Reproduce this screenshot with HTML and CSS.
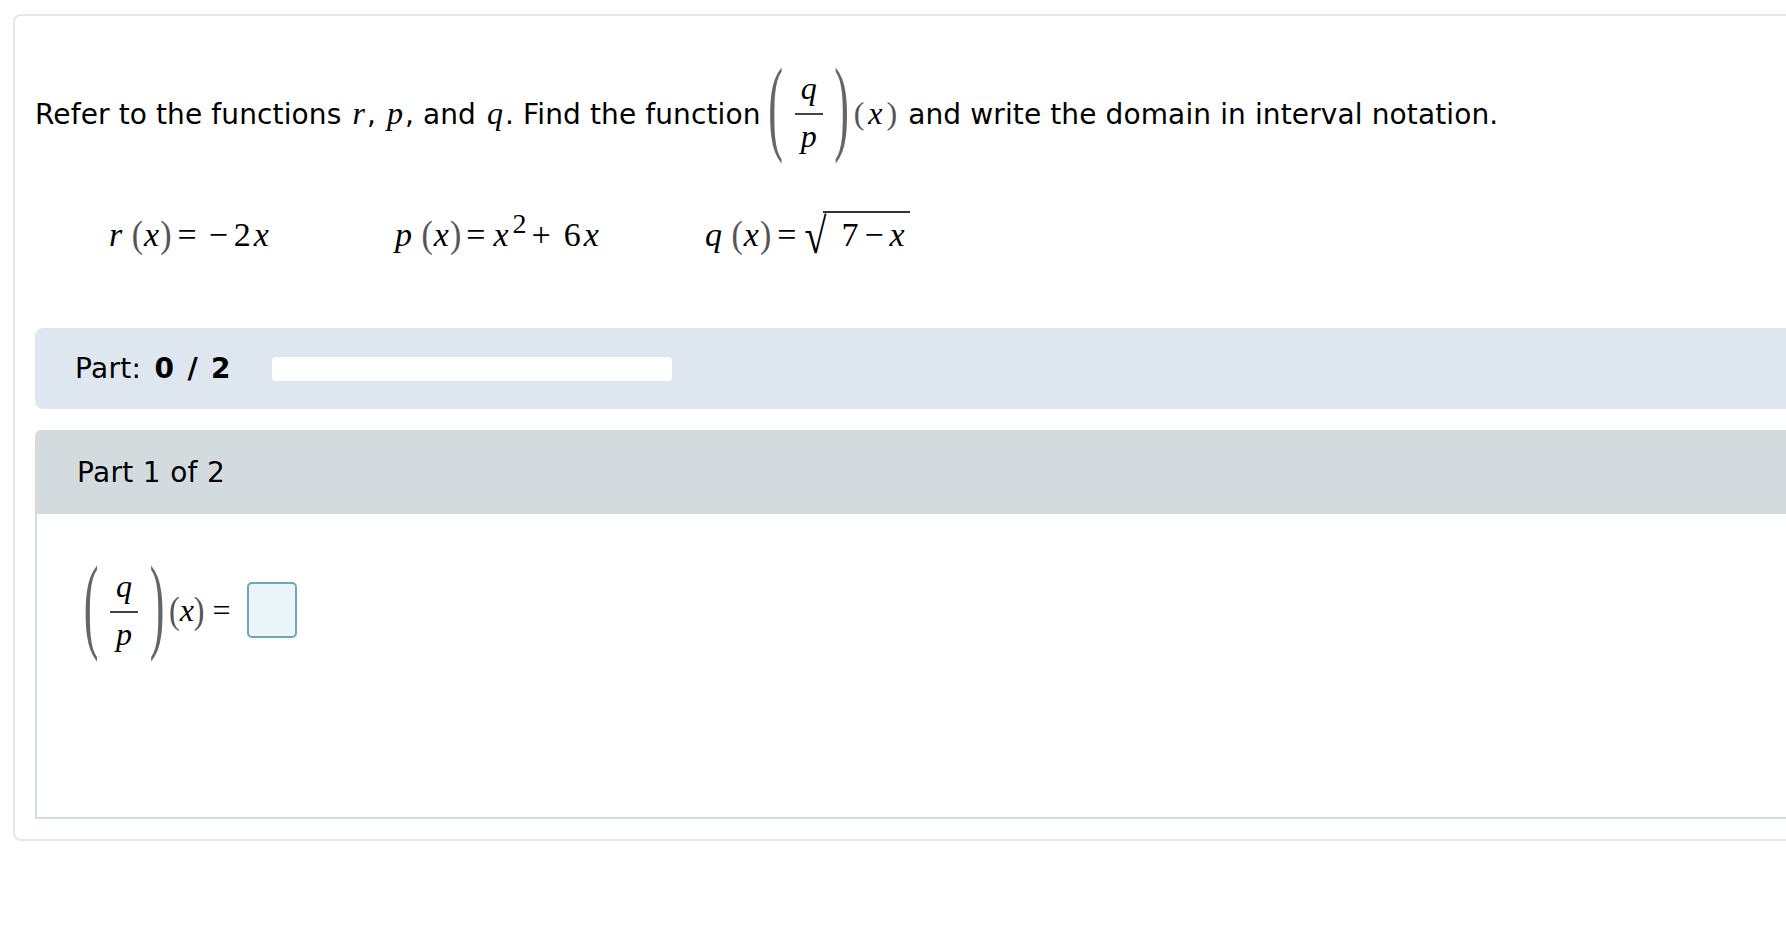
FILE: index.html
```html
<!DOCTYPE html>
<html lang="en">
<head>
    <meta charset="UTF-8">
    <title>Functions</title>
    <link rel="stylesheet" href="styles.css">
</head>
<body>
    <div class="card">
        <p class="question">Refer to the functions <i class="mi">r</i>, <i class="mi">p</i>, and <i class="mi">q</i>. Find the function <span class="frac-group q-group"><span class="bp"><span>(</span></span><span class="frac"><i class="mi">q</i><span class="bar"></span><i class="mi den">p</i></span><span class="bp"><span>)</span></span></span><span class="pr">(</span><i class="mi">x</i><span class="pr">)</span> and write the domain in interval notation.</p>

        <div class="fn-row">
            <div class="fn fn-r"><i>r</i> <span class="pr">(</span><i>x</i><span class="pr">)</span><span class="op eq-r">=</span><span class="op neg">−</span>2<i class="after-num">x</i></div>
            <div class="fn fn-p"><i>p</i> <span class="pr">(</span><i>x</i><span class="pr">)</span><span class="op eq-p">=</span><i>x</i><span class="sup">2</span><span class="op plus">+</span>6<i class="after-num">x</i></div>
            <div class="fn fn-q"><i>q</i> <span class="pr">(</span><i>x</i><span class="pr">)</span><span class="op eq-q">=</span><span class="rad">√</span><span class="radicand">7<span class="op minus">−</span><i>x</i></span></div>
        </div>

        <div class="part-bar">
            <span class="part-label">Part: <b>0 / 2</b></span>
            <div class="progress"></div>
        </div>

        <div class="section">
            <div class="section-head">Part 1 of 2</div>
            <div class="section-body">
                <div class="answer">
                    <span class="frac-group a-group"><span class="bp"><span>(</span></span><span class="frac"><i class="mi">q</i><span class="bar"></span><i class="mi den">p</i></span><span class="bp"><span>)</span></span></span>
                    <span class="pr">(</span><i class="mi">x</i><span class="pr">)</span><span class="eq">=</span>
                    <div class="answer-box"></div>
                </div>
            </div>
        </div>
    </div>
</body>
</html>
```

FILE: styles.css
```css
body {
    margin: 0;
    overflow: hidden;
    background: #fff;
    font-family: "DejaVu Sans", Verdana, sans-serif;
    font-size: 28px;
    letter-spacing: 0.32px;
    color: #000;
}

.card {
    margin: 14px 0 0 13px;
    width: 1850px;
    border: 2px solid #e3e8eb;
    border-radius: 8px;
    padding: 52px 0 20px 20px;
}

.question {
    margin: 0;
    white-space: nowrap;
    letter-spacing: 0.12px;
}

.question > .mi {
    margin: 0 2px;
}

.question .pr {
    margin: 0 2px;
}

.mi,
.fn i {
    font-family: "Liberation Serif", "Times New Roman", serif;
    font-style: italic;
    font-size: 32px;
    letter-spacing: 0;
}

.pr {
    font-family: "Liberation Serif", "Times New Roman", serif;
    font-size: 32px;
    letter-spacing: 0;
    color: #555;
}

/* stretched brackets round the fraction */
.frac-group {
    display: inline-flex;
    align-items: center;
    height: 88px;
}

.q-group {
    vertical-align: middle;
    padding-bottom: 8px;
    margin: 0 2px 0 -2px;
}

.a-group {
    margin-right: 4px;
}

.bp {
    display: flex;
    align-items: center;
    justify-content: center;
    width: 16px;
    height: 88px;
}

.bp span {
    display: inline-block;
    font-family: "Liberation Serif", "Times New Roman", serif;
    font-size: 44px;
    line-height: 44px;
    color: #666;
    transform: scaleY(2.42) translateY(-2px);
}

.frac {
    display: inline-flex;
    flex-direction: column;
    align-items: center;
    margin: 0 11px;
}

.frac .mi {
    line-height: 32px;
}

.bar {
    width: 28px;
    margin-top: 9px;
    border-top: 2px solid #444;
}

.frac .den {
    margin-top: 5px;
}

.fn-row {
    display: flex;
    align-items: baseline;
    padding-left: 74px;
    margin-top: 40px;
    line-height: 40px;
    font-family: "Liberation Serif", "Times New Roman", serif;
    font-size: 34px;
    letter-spacing: 0;
}

.fn-row .fn i,
.fn-row .pr {
    font-size: 34px;
}

.fn-r {
    width: 286px;
}

.fn-p {
    width: 310px;
}

.fn .pr {
    display: inline-block;
    transform: scaleY(1.1);
    margin: 0 1px;
}

.eq-r {
    margin: 0 4px 0 5px;
}

.neg {
    margin: 0 6px 0 8px;
}

.after-num {
    margin-left: 3px;
}

.eq-p {
    margin: 0 8px 0 4px;
}

.plus {
    margin: 0 13px 0 5px;
}

.eq-q {
    margin: 0 4px 0 5px;
}

.minus {
    margin: 0 6px;
}

.sup {
    font-size: 28px;
    vertical-align: 13px;
    margin-left: 4px;
}

.rad {
    display: inline-block;
    font-size: 40px;
    margin-left: 4px;
    transform: scaleY(1.25) translateY(3px);
}

.radicand {
    border-top: 2px solid #333;
    padding: 3px 5px 0 18px;
    margin-left: -3px;
}

.part-bar {
    display: flex;
    align-items: center;
    height: 81px;
    margin-top: 73px;
    padding-left: 40px;
    background-color: #dee7ef;
    border-radius: 8px 0 0 8px;
}

.part-label b {
    font-weight: bold;
    margin-left: 4px;
    word-spacing: 3px;
}

.progress {
    width: 400px;
    height: 24px;
    margin-left: 41px;
    background: #fff;
    border-radius: 4px;
}

.section {
    margin-top: 21px;
}

.section-head {
    display: flex;
    align-items: center;
    height: 84px;
    padding-left: 42px;
    background-color: #d4dbdf;
    border-radius: 6px 0 0 0;
}

.section-body {
    height: 305px;
    box-sizing: border-box;
    border-left: 2px solid #d4dbdf;
    border-bottom: 2px solid #d4dbdf;
    padding-left: 46px;
    padding-top: 52px;
}

.answer {
    display: flex;
    align-items: center;
    height: 88px;
    font-family: "Liberation Serif", "Times New Roman", serif;
    font-size: 32px;
    letter-spacing: 0;
}

.answer .pr {
    display: inline-block;
    transform: scaleY(1.2);
}

.eq {
    margin-left: 8px;
}

.answer-box {
    width: 50px;
    height: 56px;
    box-sizing: border-box;
    margin-left: 16px;
    border: 2px solid #6aa8b9;
    border-radius: 5px;
    background: #eaf5f9;
}
```
